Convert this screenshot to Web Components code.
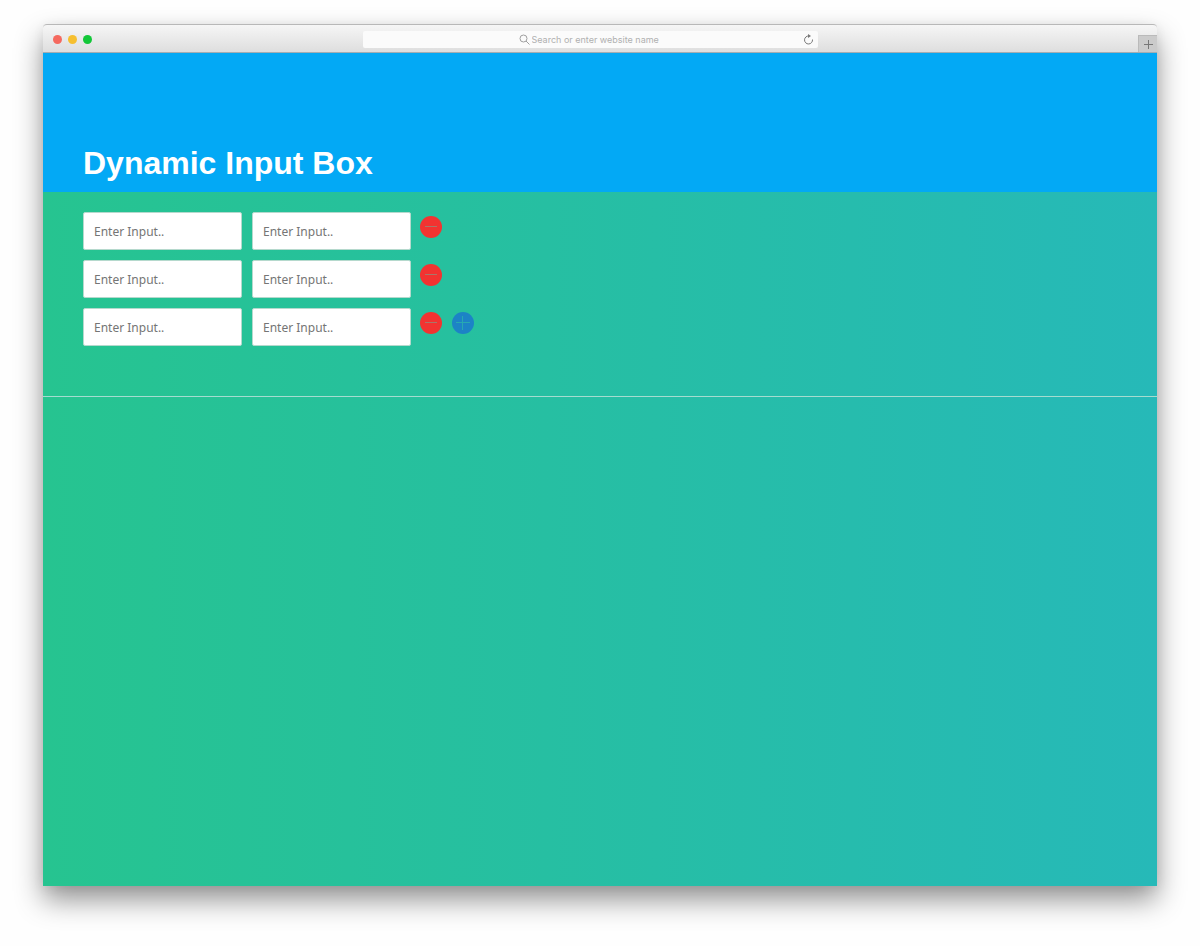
<!DOCTYPE html>
<html lang="en">
<head>
  <meta charset="utf-8">
  <title>Dynamic Input Box</title>
  <style>
    body {
      margin: 0;
      min-height: 100vh;
      background: #fefefe;
      font-family: "Liberation Sans", Arial, sans-serif;
    }
  </style>
</head>
<body>
  <browser-window>
    <page-header>Dynamic Input Box</page-header>
    <input-list rows="3"></input-list>
  </browser-window>

  <script>
    class BrowserWindow extends HTMLElement {
      constructor() {
        super();
        this.attachShadow({ mode: 'open' }).innerHTML = `
          <style>
            :host {
              display: flex;
              box-sizing: border-box;
              min-height: 100vh;
              padding: 24px 43px 60px;
            }

            .window {
              display: flex;
              flex: 1;
              flex-direction: column;
              border-radius: 4px 4px 0 0;
              box-shadow: 0 14px 28px rgba(0, 0, 0, 0.42), 0 2px 12px rgba(0, 0, 0, 0.06);
            }

            .toolbar {
              display: grid;
              grid-template-columns: 1fr 455px 1fr;
              align-items: center;
              box-sizing: border-box;
              height: 29px;
              padding-top: 2px;
              border-top: 1px solid #b8b8b8;
              border-bottom: 1px solid #a5adb2;
              border-radius: 4px 4px 0 0;
              background: linear-gradient(#f6f6f6, #dedede);
            }

            .dots {
              display: flex;
              gap: 6px;
              padding-left: 10px;
            }

            .dots span {
              width: 9px;
              height: 9px;
              border-radius: 50%;
            }

            .red { background: #f5695f; }
            .yellow { background: #f6bf2f; }
            .green { background: #12c738; }

            .address {
              display: flex;
              align-items: center;
              margin-right: 10px;
              margin-left: -10px;
              height: 17px;
              border-radius: 2px;
              background: #fbfbfb;
            }

            .search {
              display: flex;
              flex: 1;
              align-items: center;
              justify-content: center;
              gap: 2px;
              padding-left: 24px;
            }

            .search input {
              width: 136px;
              padding: 0;
              border: 0;
              outline: 0;
              background: none;
              font: 9px Inter, "Liberation Sans", sans-serif;
            }

            .search input::placeholder {
              color: #b0b0b0;
              opacity: 1;
            }

            button {
              display: flex;
              align-items: center;
              justify-content: center;
              padding: 0;
              border: 0;
              background: none;
            }

            .reload {
              width: 18px;
            }

            .tab {
              align-self: end;
              justify-self: end;
              width: 19px;
              height: 17px;
              border: 1px solid #bababa;
              border-width: 1px 0 0 1px;
              background: #cbcbcb;
            }

            svg {
              display: block;
              fill: none;
              stroke: #777;
            }

            .content {
              display: flex;
              flex: 1;
              flex-direction: column;
              background: linear-gradient(90deg, #26c490, #26b9b8);
            }
          </style>

          <div class="window">
            <div class="toolbar">
              <div class="dots">
                <span class="red"></span>
                <span class="yellow"></span>
                <span class="green"></span>
              </div>
              <div class="address">
                <label class="search">
                  <svg width="11" height="11" viewBox="0 0 11 11" style="stroke: #a0a0a0">
                    <circle cx="4.5" cy="4.5" r="3.5"/>
                    <path d="M7 7l3.5 3.5"/>
                  </svg>
                  <input type="text" placeholder="Search or enter website name">
                </label>
                <button class="reload" type="button" aria-label="Reload">
                  <svg width="11" height="11" viewBox="0 0 11 11">
                    <path d="M6 2A4 4 0 1 0 9.5 5.5"/>
                    <path d="M5 0L8 2L5 4Z" fill="#777" stroke="none"/>
                  </svg>
                </button>
              </div>
              <button class="tab" type="button" aria-label="New tab">
                <svg width="9" height="9" viewBox="0 0 9 9">
                  <path d="M4.5 0V9M0 4.5H9"/>
                </svg>
              </button>
            </div>
            <div class="content"><slot></slot></div>
          </div>
        `;
      }
    }

    class PageHeader extends HTMLElement {
      constructor() {
        super();
        this.attachShadow({ mode: 'open' }).innerHTML = `
          <style>
            :host {
              display: block;
              padding: 92px 40px 11px;
              background: #03a9f5;
              color: #fff;
            }

            h1 {
              margin: 0;
              font-size: 32px;
              line-height: 36px;
            }
          </style>
          <h1><slot></slot></h1>
        `;
      }
    }

    class InputRow extends HTMLElement {
      constructor() {
        super();
        this.attachShadow({ mode: 'open' }).innerHTML = `
          <style>
            :host {
              display: flex;
              gap: 10px;
            }

            input {
              box-sizing: border-box;
              width: 159px;
              height: 38px;
              padding: 0 10px;
              border: 1px solid #b5d9cd;
              border-radius: 2px;
              background: #fff;
              font: 12px "Noto Sans", sans-serif;
            }

            input::placeholder {
              color: #757575;
              opacity: 1;
            }

            .actions {
              display: flex;
              gap: 10px;
              padding-top: 4px;
              margin-left: -1px;
            }

            button {
              width: 22px;
              height: 22px;
              padding: 0;
              border: 0;
              border-radius: 50%;
              cursor: pointer;
            }

            .remove {
              background: #f23331;
            }

            .add {
              display: none;
              background: #1c83c6;
            }

            :host(:last-of-type) .add {
              display: block;
            }

            svg {
              display: block;
              fill: none;
            }
          </style>

          <input type="text" placeholder="Enter Input.." aria-label="First value">
          <input type="text" placeholder="Enter Input.." aria-label="Second value">
          <div class="actions">
            <button class="remove" type="button" aria-label="Remove row">
              <svg width="22" height="22" viewBox="0 0 22 22" stroke="#a8776a">
                <path d="M5 10.5H17"/>
              </svg>
            </button>
            <button class="add" type="button" aria-label="Add row">
              <svg width="22" height="22" viewBox="0 0 22 22" stroke="#27a8b2">
                <path d="M4 10.5H18M10.5 4V18"/>
              </svg>
            </button>
          </div>
        `;

        this.shadowRoot.querySelector('.remove').addEventListener('click', () => {
          if (this.parentNode.querySelectorAll('input-row').length > 1) {
            this.remove();
          }
        });

        this.shadowRoot.querySelector('.add').addEventListener('click', () => {
          this.after(document.createElement('input-row'));
        });
      }
    }

    class InputList extends HTMLElement {
      constructor() {
        super();
        this.attachShadow({ mode: 'open' });
      }

      connectedCallback() {
        const count = Number(this.getAttribute('rows')) || 1;
        this.shadowRoot.innerHTML = `
          <style>
            :host {
              display: block;
            }

            form {
              display: flex;
              flex-direction: column;
              gap: 10px;
              padding: 20px 40px 50px;
              border-bottom: 1px solid #a5dcd0;
            }
          </style>
          <form>${'<input-row></input-row>'.repeat(count)}</form>
        `;
      }
    }

    customElements.define('browser-window', BrowserWindow);
    customElements.define('page-header', PageHeader);
    customElements.define('input-row', InputRow);
    customElements.define('input-list', InputList);
  </script>
</body>
</html>
